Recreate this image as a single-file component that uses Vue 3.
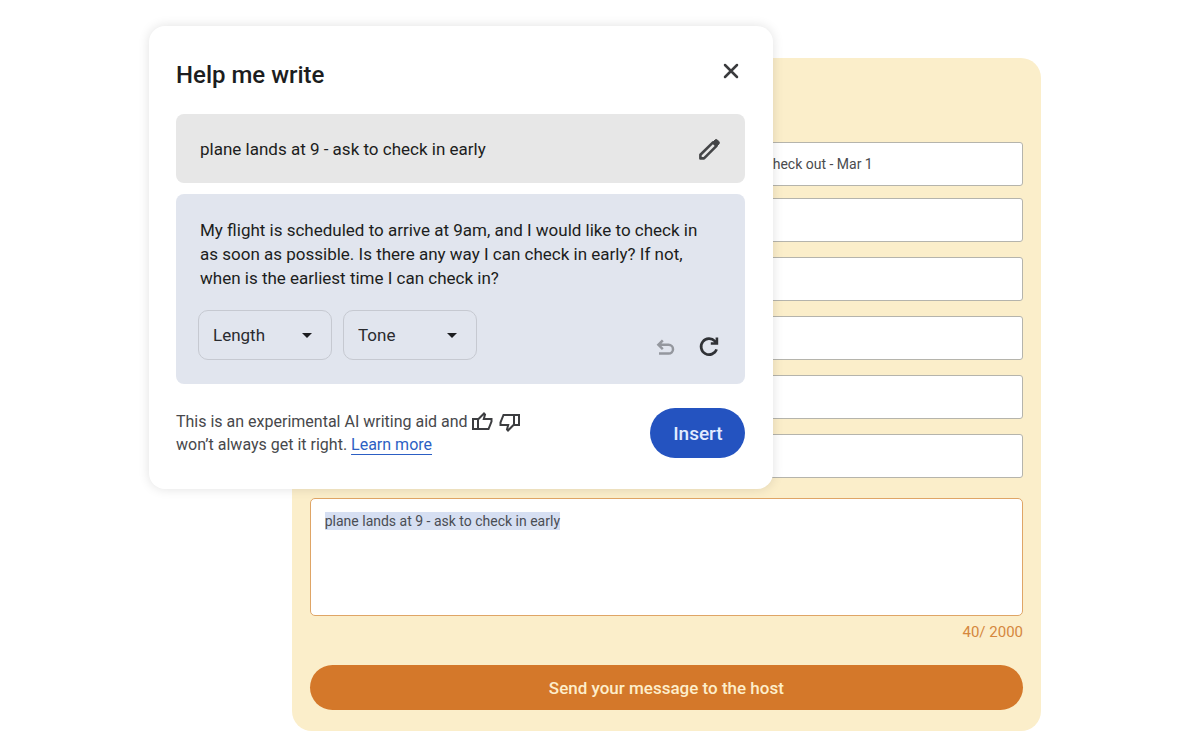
<script setup>
import { ref, computed, onMounted } from "vue";

const prompt = "plane lands at 9 - ask to check in early";
const suggestion =
  "My flight is scheduled to arrive at 9am, and I would like to check in as soon as possible. Is there any way I can check in early? If not, when is the earliest time I can check in?";

const maxLength = 2000;
const message = ref(prompt);
const messageBox = ref(null);
const dialogOpen = ref(true);
const checkIn = ref("");
const checkOut = ref("Check out - Mar 1");
const fields = ref([
  { name: "First name", value: "" },
  { name: "Last name", value: "" },
  { name: "Email", value: "" },
  { name: "Phone", value: "" },
  { name: "Guests", value: "" },
]);
const menus = ref([
  { name: "Length", value: "Length", options: ["Length", "Shorten", "Elaborate"] },
  { name: "Tone", value: "Tone", options: ["Tone", "Formal", "Casual"] },
]);
const counter = computed(() => `${message.value.length}/ ${maxLength}`);

function insert() {
  message.value = suggestion;
  dialogOpen.value = false;
}

onMounted(() => {
  messageBox.value.focus();
  messageBox.value.select();
});
</script>

<template>
  <main class="page">
    <div class="stage">
      <form class="booking" @submit.prevent>
        <div class="dates">
          <input v-model="checkIn" class="field" type="text" aria-label="Check in" />
          <input v-model="checkOut" class="field" type="text" aria-label="Check out" />
        </div>
        <div class="fields">
          <input
            v-for="field in fields"
            :key="field.name"
            v-model="field.value"
            class="field"
            type="text"
            :aria-label="field.name"
          />
        </div>
        <textarea
          ref="messageBox"
          v-model="message"
          class="message"
          spellcheck="false"
          :maxlength="maxLength"
          aria-label="Message to the host"
        ></textarea>
        <span class="counter">{{ counter }}</span>
        <button class="send" type="submit">Send your message to the host</button>
      </form>

      <section v-if="dialogOpen" class="dialog" role="dialog" aria-labelledby="dialog-title">
        <header class="dialog-header">
          <h1 id="dialog-title">Help me write</h1>
          <button class="icon-btn" type="button" aria-label="Close" @click="dialogOpen = false">
            <svg viewBox="0 0 28 28" fill="none" stroke="#3a3b3d" stroke-width="2.5" stroke-linecap="round">
              <path d="M8 8l12 12M20 8L8 20" />
            </svg>
          </button>
        </header>

        <div class="prompt">
          <p>{{ prompt }}</p>
          <button class="icon-btn" type="button" aria-label="Edit prompt">
            <svg viewBox="0 0 28 28" fill="none" stroke="#444547" stroke-width="2.6" stroke-linejoin="round">
              <path d="M5.4 23.4v-3.6L18 7.4l3.5 3.5L9 23.4z" />
              <path d="M17.4 7.6l2.6-2.6q1.2-1 2.4 0l1.5 1.6q1 1.2 0 2.4l-2.5 2.5z" fill="#444547" stroke-width="1" />
            </svg>
          </button>
        </div>

        <div class="result">
          <p>{{ suggestion }}</p>
          <div class="tools">
            <label v-for="menu in menus" :key="menu.name" class="menu">
              <select v-model="menu.value" :aria-label="menu.name">
                <option v-for="option in menu.options" :key="option">{{ option }}</option>
              </select>
              <svg class="caret" viewBox="0 0 10 5"><path d="M0 0h10L5 5z" fill="#1c1d20" /></svg>
            </label>
            <div class="history">
              <button class="icon-btn" type="button" aria-label="Undo">
                <svg viewBox="0 0 28 28" fill="none" stroke="#94979e" stroke-width="2.5">
                  <path d="M11.8 8.4l-4.4 4.4 4.4 4.4M7.4 12.8H17.6a4.4 4.4 0 0 1 0 8.8H8" />
                </svg>
              </button>
              <button class="icon-btn" type="button" aria-label="Regenerate">
                <svg viewBox="0 0 28 28" fill="none" stroke="#303236" stroke-width="2.7">
                  <path d="M21.6 17.4a8 8 0 1 1-1.7-8.3l1.5 1.6" />
                  <path d="M23.2 5.4v7.4h-7.4v-2.6h3.4l1.4-1.2V5.4z" fill="#303236" stroke="none" />
                </svg>
              </button>
            </div>
          </div>
        </div>

        <footer class="dialog-footer">
          <p>
            This is an experimental AI writing aid and<br />
            won’t always get it right. <a href="#">Learn more</a>
          </p>
          <div class="votes">
            <button class="vote" type="button" aria-label="Good suggestion">
              <svg viewBox="0 0 24 24" fill="none" stroke="#3c3d40" stroke-width="2">
                <path d="M3 9h5v10H3zM8 9.5l6-6 1 1L13.8 9h7.7v2.5L18.5 19H8" />
              </svg>
            </button>
            <button class="vote" type="button" aria-label="Bad suggestion">
              <svg class="down" viewBox="0 0 24 24" fill="none" stroke="#3c3d40" stroke-width="2">
                <path d="M3 9h5v10H3zM8 9.5l6-6 1 1L13.8 9h7.7v2.5L18.5 19H8" />
              </svg>
            </button>
          </div>
          <button class="insert" type="button" @click="insert">Insert</button>
        </footer>
      </section>
    </div>
  </main>
</template>

<style>
body {
  margin: 0;
  background: #fff;
}
</style>

<style scoped>
* {
  box-sizing: border-box;
}
.page {
  padding: 26px 159px 14px 149px;
  font-family: Roboto, "Noto Sans", sans-serif;
  color: #1c1d20;
}
.stage {
  position: relative;
  padding-top: 32px;
}
h1,
p {
  margin: 0;
}
button,
input,
select,
textarea {
  font-family: inherit;
}
button {
  padding: 0;
  border: 0;
  background: none;
  cursor: pointer;
}

.booking {
  display: flex;
  flex-direction: column;
  margin-left: 16%;
  padding: 84px 18px 21px;
  border-radius: 20px;
  background: #fbeeca;
}
.dates {
  display: grid;
  grid-template-columns: 14fr 9fr;
  gap: 12px;
}
.fields {
  display: grid;
  gap: 15px;
  margin: 12px 0 20px;
}
.field {
  width: 100%;
  height: 44px;
  padding: 0 14px;
  border: 1px solid #b5b4ac;
  border-radius: 3px;
  background: #fff;
  color: #4a4b4d;
  font-size: 14px;
}
.message {
  height: 118px;
  padding: 13px 14px;
  border: 1px solid #dfa566;
  border-radius: 5px;
  background: #fff;
  color: #4a4d54;
  font-size: 14px;
  line-height: 18px;
  resize: none;
  outline: none;
}
.message::selection {
  background: #d6dff2;
  color: #4a4d54;
}
.counter {
  align-self: flex-end;
  margin: 8px 0 25px;
  color: #d5873d;
  font-size: 15px;
  line-height: 16px;
}
.send {
  height: 45px;
  border-radius: 23px;
  background: #d4782a;
  color: #fdeecb;
  font-size: 17px;
  font-weight: 500;
}

.dialog {
  position: absolute;
  top: 0;
  left: 0;
  width: 70%;
  padding: 31px 28px 31px 27px;
  border-radius: 16px;
  background: #fff;
  box-shadow: 0 0 12px rgba(0, 0, 0, 0.12);
}
.dialog-header {
  display: flex;
  justify-content: space-between;
  margin-bottom: 21px;
}
h1 {
  font-size: 24px;
  font-weight: 500;
  line-height: 36px;
}
.icon-btn {
  width: 28px;
  height: 28px;
}
svg {
  display: block;
  width: 100%;
  height: 100%;
}
.prompt {
  display: flex;
  align-items: center;
  justify-content: space-between;
  height: 69px;
  margin-bottom: 11px;
  padding: 0 22px 0 24px;
  border-radius: 8px;
  background: #e7e7e7;
  font-size: 17px;
}
.result {
  padding: 24px 22px;
  border-radius: 8px;
  background: #e1e5ee;
  font-size: 17px;
  line-height: 24px;
}
.result p {
  padding: 0 12px 0 2px;
}
.tools {
  display: flex;
  gap: 11px;
  margin-top: 20px;
}
.menu {
  position: relative;
}
select {
  width: 134px;
  height: 50px;
  padding: 0 14px;
  border: 1px solid #c6c9d1;
  border-radius: 10px;
  background: transparent;
  color: #2a2b2f;
  font-size: 17px;
  appearance: none;
}
.caret {
  position: absolute;
  top: 23px;
  right: 20px;
  width: 10px;
  height: 5px;
  pointer-events: none;
}
.history {
  display: flex;
  align-items: flex-end;
  gap: 16px;
  margin-left: auto;
}
.dialog-footer {
  display: flex;
  align-items: center;
  gap: 2px;
  margin-top: 24px;
  color: #47484b;
  font-size: 16px;
  line-height: 23px;
}
.dialog-footer a {
  color: #2c5fc4;
  text-underline-offset: 4px;
}
.votes {
  display: flex;
  align-self: flex-start;
  gap: 4px;
}
.vote {
  width: 24px;
  height: 28px;
}
.down {
  transform: rotate(180deg);
}
.insert {
  width: 95px;
  height: 50px;
  margin-left: auto;
  border-radius: 25px;
  background: #2453c0;
  color: #e2ebff;
  font-size: 19px;
  font-weight: 500;
}
</style>
